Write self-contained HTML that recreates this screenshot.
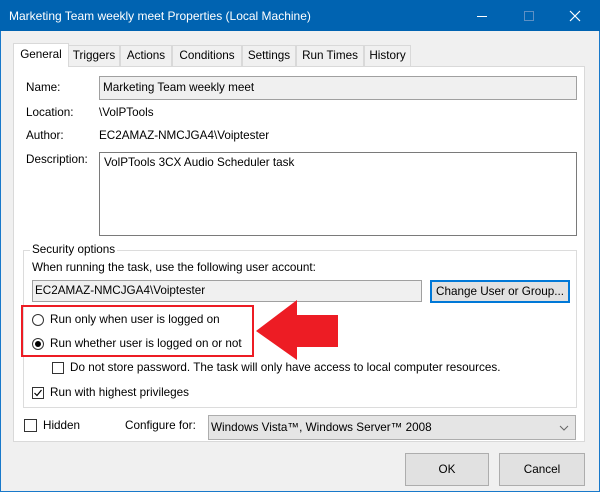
<!DOCTYPE html>
<html><head><meta charset="utf-8"><style>
*{box-sizing:border-box;margin:0;padding:0}
body{width:600px;height:492px;overflow:hidden;background:#f0f0f0;font-family:"Liberation Sans",sans-serif;font-size:11.7px;color:#000;position:relative}
.a{position:absolute;white-space:nowrap}
.win{position:absolute;left:0;top:0;width:600px;height:492px;border:1px solid #1979ca;border-top:none}
.title{position:absolute;left:0;top:0;width:600px;height:31px;background:#0063b1;color:#fff;font-size:12px}
.tab{position:absolute;top:45px;height:21px;border:1px solid #d9d9d9;border-bottom:none;background:#f0f0f0;text-align:center;line-height:20px}
.panel{position:absolute;left:13px;top:66px;width:572px;height:376px;background:#fff;border:1px solid #d9d9d9}
.lbl{position:absolute;line-height:14px;white-space:nowrap}
.box{position:absolute;border:1px solid #a0a0a0;background:#f0f0f0}
.cb{position:absolute;width:12px;height:12px;border:1px solid #333;background:#fff}
.rb{position:absolute;width:12px;height:12px;border:1px solid #333;border-radius:50%;background:#fff}
.btn{position:absolute;border:1px solid #adadad;background:#e1e1e1;text-align:center}
</style></head><body>
<div class="win"></div>
<div class="title"><span class="a" style="left:9px;top:9px">Marketing Team weekly meet Properties (Local Machine)</span>
<span class="a" style="left:477px;top:16px;width:10px;height:1px;background:#fff"></span>
<span class="a" style="left:524px;top:11px;width:10px;height:10px;border:1px solid #5d90c4"></span>
<svg class="a" style="left:569px;top:10px" width="12" height="12"><path d="M1 1L11 11M11 1L1 11" stroke="#fff" stroke-width="1.2"/></svg>
</div>
<div class="panel"></div>
<div class="tab" style="left:13px;top:43px;width:56px;height:24px;background:#fff;border-color:#d9d9d9;z-index:2;line-height:22px">General</div>
<div class="tab" style="left:68px;width:52px">Triggers</div>
<div class="tab" style="left:120px;width:52px">Actions</div>
<div class="tab" style="left:172px;width:70px">Conditions</div>
<div class="tab" style="left:242px;width:54px">Settings</div>
<div class="tab" style="left:296px;width:68px">Run Times</div>
<div class="tab" style="left:364px;width:47px">History</div>

<div class="lbl" style="left:26px;top:81px">Name:</div>
<div class="box" style="left:99px;top:76px;width:478px;height:24px"><span class="a" style="left:3px;top:4px">Marketing Team weekly meet</span></div>
<div class="lbl" style="left:26px;top:106px">Location:</div>
<div class="lbl" style="left:99px;top:106px">\VolPTools</div>
<div class="lbl" style="left:26px;top:129px">Author:</div>
<div class="lbl" style="left:99px;top:129px">EC2AMAZ-NMCJGA4\Voiptester</div>
<div class="lbl" style="left:26px;top:153px">Description:</div>
<div class="box" style="left:99px;top:152px;width:478px;height:84px;background:#fff;border:1px solid #7a7a7a"><span class="a" style="left:4px;top:3px">VolPTools 3CX Audio Scheduler task</span></div>

<div class="a" style="left:23px;top:250px;width:554px;height:158px;border:1px solid #dcdcdc"></div>
<div class="lbl" style="left:30px;top:243px;background:#fff;padding:0 2px">Security options</div>
<div class="lbl" style="left:32px;top:261px">When running the task, use the following user account:</div>
<div class="box" style="left:32px;top:280px;width:390px;height:22px"><span class="a" style="left:2px;top:3px">EC2AMAZ-NMCJGA4\Voiptester</span></div>
<div class="btn" style="left:430px;top:280px;width:140px;height:23px;border:2px solid #0078d7;line-height:19px">Change User or Group...</div>

<div class="rb" style="left:32px;top:314px"></div>
<div class="lbl" style="left:50px;top:313px">Run only when user is logged on</div>
<div class="rb" style="left:32px;top:338px"><div style="position:absolute;left:2px;top:2px;width:6px;height:6px;border-radius:50%;background:#000"></div></div>
<div class="lbl" style="left:50px;top:337px">Run whether user is logged on or not</div>
<div class="a" style="left:21px;top:305px;width:233px;height:52px;border:2px solid #ed1c24"></div>
<svg class="a" style="left:254px;top:298px" width="88" height="64"><path d="M2 33L43 2V17H84V49H43V62Z" fill="#ed1c24"/></svg>

<div class="cb" style="left:52px;top:362px"></div>
<div class="lbl" style="left:70px;top:361px">Do not store password. The task will only have access to local computer resources.</div>
<div class="cb" style="left:32px;top:387px"><svg style="position:absolute;left:0;top:0" width="10" height="10"><path d="M1.5 5L4 7.5L8.5 2" stroke="#000" fill="none" stroke-width="1.2"/></svg></div>
<div class="lbl" style="left:50px;top:386px">Run with highest privileges</div>

<div class="cb" style="left:24px;top:419px;width:13px;height:13px"></div>
<div class="lbl" style="left:43px;top:419px">Hidden</div>
<div class="lbl" style="left:125px;top:419px">Configure for:</div>
<div class="box" style="left:208px;top:415px;width:368px;height:25px;background:#e5e5e5;border-color:#adadad"><span class="a" style="left:2px;top:5px">Windows Vista™, Windows Server™ 2008</span>
<svg class="a" style="right:6px;top:9px" width="10" height="6"><path d="M1 1L5 5L9 1" stroke="#666" fill="none"/></svg></div>

<div class="btn" style="left:405px;top:453px;width:84px;height:33px;line-height:31px">OK</div>
<div class="btn" style="left:499px;top:453px;width:86px;height:33px;line-height:31px">Cancel</div>
</body></html>
